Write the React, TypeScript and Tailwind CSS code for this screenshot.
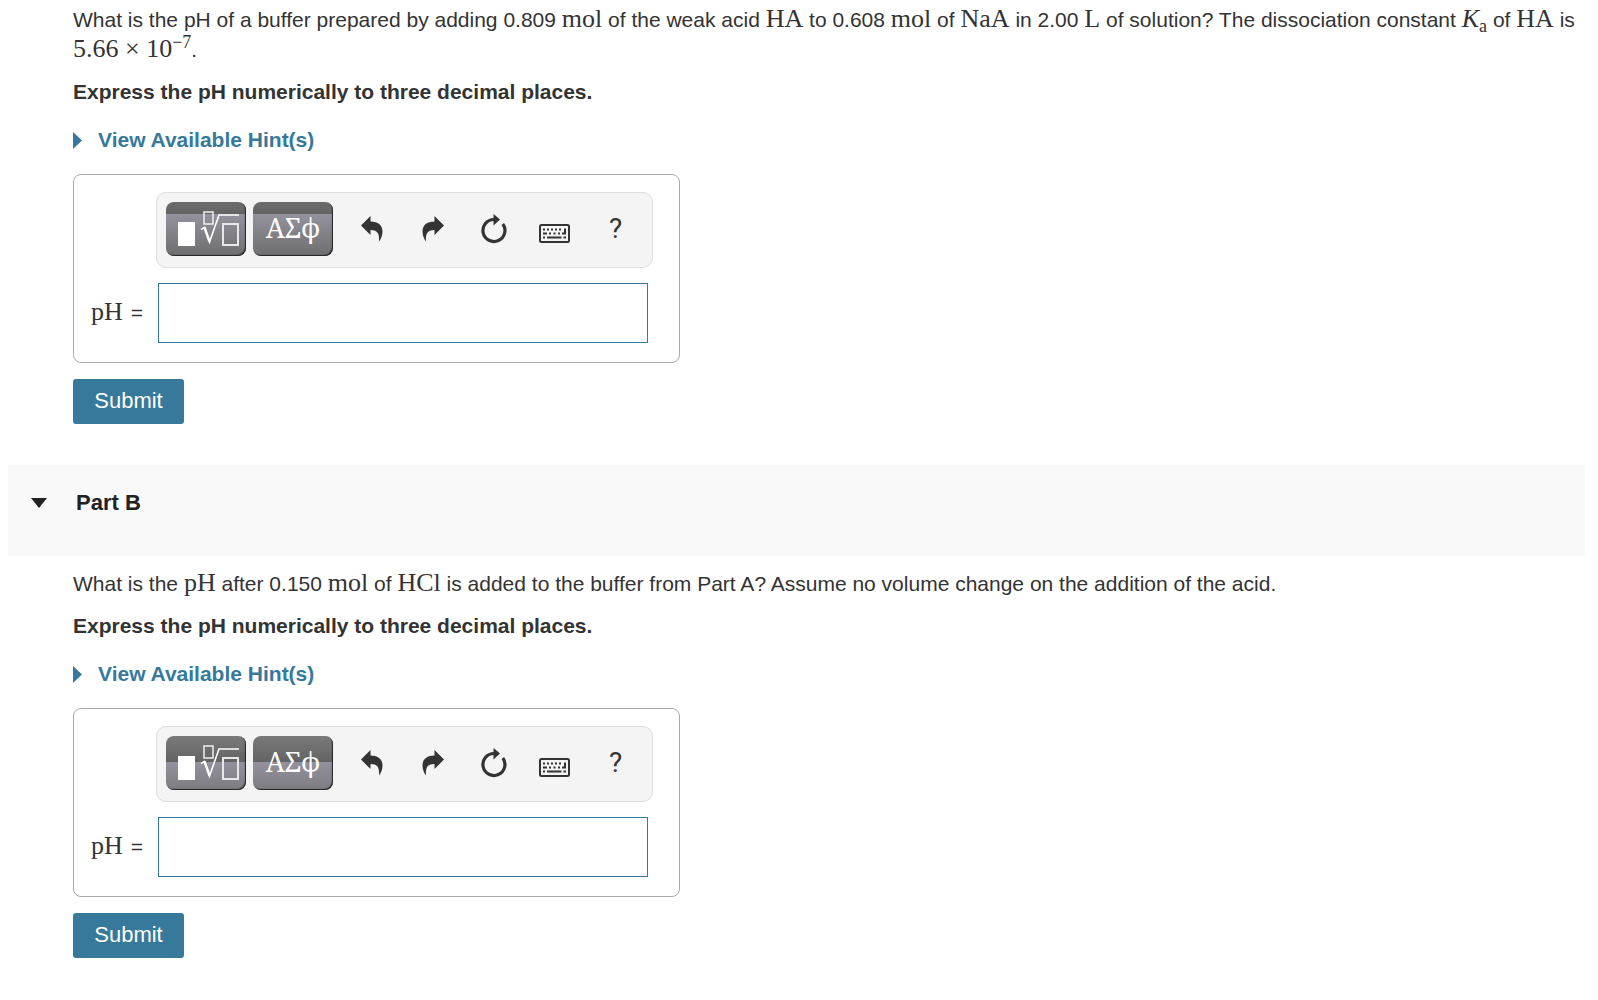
import React from "react";

const Unit = (props: { children: React.ReactNode }) => {
  return (
    <span className="font-['Liberation_Serif',serif] text-[26px] leading-none">
      {props.children}
    </span>
  );
};

const TemplatesIcon = () => (
  <svg width="80" height="54" viewBox="0 0 80 54" fill="none" aria-hidden="true">
    <rect x="12" y="20" width="17" height="24" fill="#fff" />
    <rect x="38" y="10" width="9" height="12" stroke="#f0f0f0" strokeWidth="1.5" />
    <path d="M35 27.5l3.5-2 5 14.5L53 13H73" stroke="#fff" strokeWidth="1.6" />
    <path d="M38.5 25.5l5 14" stroke="#fff" strokeWidth="2.4" />
    <rect x="57" y="22" width="15" height="21" stroke="#e8e8e8" strokeWidth="2" />
  </svg>
);

const UndoIcon = () => (
  <svg width="22" height="26" viewBox="0 0 22 26" fill="#333" aria-hidden="true">
    <path d="M0 9.5L9.5 0v5.5C17 5.5 21.5 9 21.5 15.5c0 4-1.5 7.5-3.5 10C18.5 18 17 14 9.5 14V19z" />
  </svg>
);

const RedoIcon = () => (
  <svg width="22" height="26" viewBox="0 0 22 26" fill="#333" aria-hidden="true">
    <path d="M22 9.5L12.5 0v5.5C5 5.5.5 9 .5 15.5c0 4 1.5 7.5 3.5 10C3.5 18 5 14 12.5 14V19z" />
  </svg>
);

const ResetIcon = () => (
  <svg width="26" height="30" viewBox="0 0 26 30" fill="none" aria-hidden="true">
    <path d="M14 5.5H13A11 11 0 1 0 21.8 10" stroke="#333" strokeWidth="3.2" />
    <path d="M12.5 0L19 5.5L12.5 11.5z" fill="#333" />
  </svg>
);

const KeyboardIcon = () => (
  <svg width="31" height="19" viewBox="0 0 31 19" fill="none" aria-hidden="true">
    <rect x="1" y="1" width="29" height="17" rx="1.5" stroke="#333" strokeWidth="2" />
    <path d="M4 5.5h2M8 5.5h2M12 5.5h2M16 5.5h2M20 5.5h2M4 9.5h4M10 9.5h2M14.5 9.5h2M19 9.5h2M4 13.5h2M8 13.5h14.5M24.5 13.5h2.5" stroke="#333" strokeWidth="2" />
    <path d="M26 4.5v6M23 9.5h4" stroke="#333" strokeWidth="2" />
  </svg>
);

const ToolButton = (props: { label: string; children: React.ReactNode }) => {
  return (
    <button
      type="button"
      aria-label={props.label}
      className="flex h-[54px] w-[61px] items-center justify-center text-[28px] text-[#333] cursor-pointer"
    >
      {props.children}
    </button>
  );
};

const PaletteButton = (props: {
  label: string;
  split: boolean;
  children: React.ReactNode;
}) => {
  const shade = props.split
    ? "bg-[linear-gradient(#7a7a7b_0%,#636363_48%,#93919c_48%,#7d7c80_100%)]"
    : "bg-[linear-gradient(#6b6b6b_0%,#646464_22%,#94929d_22%,#6e6e6f_100%)]";
  return (
    <button
      type="button"
      aria-label={props.label}
      className={`flex h-[54px] w-20 items-center justify-center rounded-lg text-white shadow-[inset_-1px_-1px_1px_#222] cursor-pointer ${shade}`}
    >
      {props.children}
    </button>
  );
};

const AnswerBox = (props: { id: string; split: boolean }) => {
  return (
    <form onSubmit={(e) => e.preventDefault()}>
      <div className="mt-[19px] w-full max-w-[607px] rounded-lg border border-[#aaa] pt-[17px] pb-[19px]">
        <div className="ml-[82px] mr-[26px] flex h-[76px] items-center rounded-[10px] border border-[#ddd] bg-[#f4f4f4] px-[9px] pb-[2px]">
          <div className="flex gap-[7px]">
            <PaletteButton label="Templates" split={props.split}>
              <TemplatesIcon />
            </PaletteButton>
            <PaletteButton label="Symbols" split={props.split}>
              <span className="pb-1 font-['Noto_Serif','Liberation_Serif',serif] text-[27px] leading-none">
                ΑΣϕ
              </span>
            </PaletteButton>
          </div>
          <div className="ml-2 flex">
            <ToolButton label="Undo">
              <UndoIcon />
            </ToolButton>
            <ToolButton label="Redo">
              <RedoIcon />
            </ToolButton>
            <ToolButton label="Reset">
              <ResetIcon />
            </ToolButton>
            <ToolButton label="Keyboard shortcuts">
              <span className="pt-2">
                <KeyboardIcon />
              </span>
            </ToolButton>
            <ToolButton label="Help">
              <span className="font-[Roboto,sans-serif]">?</span>
            </ToolButton>
          </div>
        </div>
        <div className="mt-[15px] flex items-center pl-[17px] pr-[31px]">
          <label
            htmlFor={props.id}
            className="flex w-[67px] shrink-0 items-baseline gap-2"
          >
            <Unit>pH</Unit>
            <span>=</span>
          </label>
          <input
            id={props.id}
            type="text"
            className="h-[60px] min-w-0 flex-1 border border-[#36799a] bg-white px-3 outline-none"
          />
        </div>
      </div>
      <button
        type="submit"
        className="mt-4 h-[45px] w-[111px] rounded-[3px] bg-[#36799a] pb-[2px] text-[22px] text-white cursor-pointer"
      >
        Submit
      </button>
    </form>
  );
};

const Question = (props: {
  id: string;
  split: boolean;
  children: React.ReactNode;
}) => {
  return (
    <section className="pl-[65px]">
      <p>{props.children}</p>
      <p className="mt-3 font-bold">
        Express the pH numerically to three decimal places.
      </p>
      <a
        href="#hints"
        className="mt-[18px] flex w-fit items-center font-bold text-[#36799a]"
      >
        <svg width="9" height="17" viewBox="0 0 9 17" fill="currentColor" aria-hidden="true">
          <path d="M0 0L9 8.5L0 17z" />
        </svg>
        <span className="ml-4">View Available Hint(s)</span>
      </a>
      <AnswerBox id={props.id} split={props.split} />
    </section>
  );
};

export default function App() {
  return (
    <main className="pl-2 pr-[13px] pt-[5px] font-['Liberation_Sans',Arial,sans-serif] text-[21px] leading-[30px] text-[#333]">
      <Question id="ph-a" split={false}>
        What is the pH of a buffer prepared by adding 0.809 <Unit>mol</Unit> of
        the weak acid <Unit>HA</Unit> to 0.608 <Unit>mol</Unit> of{" "}
        <Unit>NaA</Unit> in 2.00 <Unit>L</Unit> of solution? The dissociation
        constant{" "}
        <Unit>
          <i>K</i>
          <sub className="text-lg">a</sub>
        </Unit>{" "}
        of <Unit>HA</Unit> is{" "}
        <Unit>
          5.66 × 10<sup className="text-lg">−7</sup>
        </Unit>
        .
      </Question>

      <h2 className="mt-[41px] mb-[13px] flex h-[91px] items-center bg-[#f9f9f9] pb-4 pl-[23px] text-[22px] font-bold text-[#222]">
        <svg width="16" height="10" viewBox="0 0 16 10" fill="currentColor" aria-hidden="true">
          <path d="M0 0H16L8 10z" />
        </svg>
        <span className="ml-[29px]">Part B</span>
      </h2>

      <Question id="ph-b" split={true}>
        What is the <Unit>pH</Unit> after 0.150 <Unit>mol</Unit> of{" "}
        <Unit>HCl</Unit> is added to the buffer from Part A? Assume no volume
        change on the addition of the acid.
      </Question>
    </main>
  );
}
